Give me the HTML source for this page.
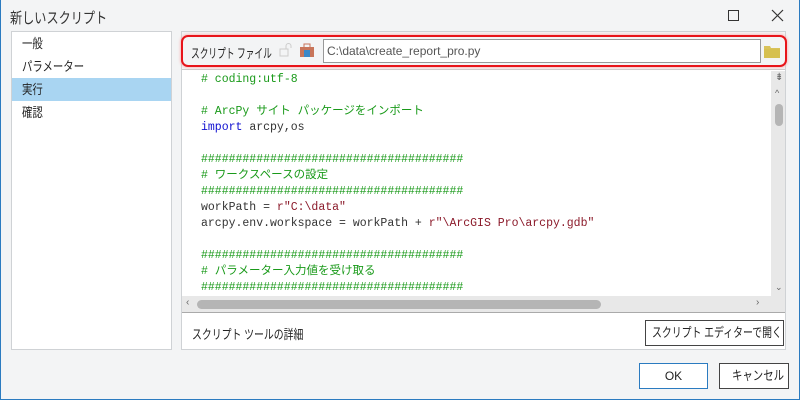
<!DOCTYPE html>
<html><head><meta charset="utf-8"><style>
*{box-sizing:border-box;margin:0;padding:0}
body{width:800px;height:400px;overflow:hidden;background:#f3f4f5;font-family:"Liberation Sans","Noto Sans CJK JP",sans-serif;color:#222;position:relative}
.frame{position:absolute;left:0;top:0;width:800px;height:400px;border:1px solid #2b7bc0;border-top:none}
.abs{position:absolute;white-space:nowrap}
.n{display:inline-block;transform:scaleX(.8);transform-origin:left center;white-space:nowrap}
.title{left:10px;top:7px;font-size:15px;color:#333}
.list{left:11px;top:31px;width:161px;height:319px;background:#fff;border:1px solid #cfd2d5}
.list div{height:23px;line-height:23px;padding-left:10px;font-size:13px}
.panel{left:181px;top:31px;width:605px;height:319px;background:#fff;border:1px solid #cfd2d5}
.tb{left:182px;top:32px;width:603px;height:38px;background:#f3f4f5;border-bottom:1px solid #ccc}
.red{left:181px;top:35px;width:606px;height:32px;border:2px solid #e8141a;border-radius:7px;box-shadow:0 0 3px #f99}
.code{left:201px;top:72px;font-family:"Liberation Mono","Noto Sans CJK JP",monospace;font-size:11.5px;line-height:16px;white-space:pre;color:#333}
.c{color:#1a9a1a}.s{color:#8b1a2a}.k{color:#1010d0}
.btn{border:1px solid #444;background:#fff;font-size:12px;text-align:center;overflow:hidden}
</style></head><body>
<div class="frame"></div>
<div class="abs title"><span class="n" style="transform:scaleX(.81)">新しいスクリプト</span></div>
<div class="abs" style="left:728px;top:10px;width:11px;height:11px;border:1px solid #333"></div>
<svg class="abs" style="left:771px;top:9px" width="13" height="13"><path d="M1 1L12 12M12 1L1 12" stroke="#333" stroke-width="1.2"/></svg>
<div class="abs list"><div><span class="n">一般</span></div><div><span class="n">パラメーター</span></div><div style="background:#a9d5f2"><span class="n">実行</span></div><div><span class="n">確認</span></div></div>
<div class="abs panel"></div>
<div class="abs tb"></div>
<div class="abs" style="left:191px;top:43px;font-size:13px"><span class="n" style="transform:scaleX(.67)">スクリプト ファイル</span></div>
<svg class="abs" style="left:279px;top:43px" width="14" height="14"><rect x="1" y="6" width="8" height="7" fill="none" stroke="#ccc"/><path d="M7 6V3a2.5 2.5 0 0 1 5 0v2" fill="none" stroke="#ccc"/></svg>
<svg class="abs" style="left:299px;top:43px" width="16" height="16"><rect x="1" y="4" width="14" height="10" fill="#c8755a"/><rect x="5" y="1" width="6" height="4" fill="none" stroke="#c8755a"/><rect x="5" y="7" width="6" height="7" fill="#3a88c8"/></svg>
<div class="abs" style="left:323px;top:39px;width:438px;height:24px;border:1px solid #999;background:#fff;font-size:12px;line-height:22px;padding-left:3px;color:#555">C:\data\create_report_pro.py</div>
<svg class="abs" style="left:764px;top:44px" width="16" height="14"><path d="M0 2h6l1 2h9v10H0z" fill="#d9c25a"/><rect x="0" y="5" width="16" height="9" fill="#d6c050"/></svg>
<div class="abs red"></div>
<div class="abs code"><span class="c"># coding:utf-8</span>

<span class="c"># ArcPy サイト パッケージをインポート</span>
<span class="k">import</span> arcpy,os

<span class="c">######################################</span>
<span class="c"># ワークスペースの設定</span>
<span class="c">######################################</span>
workPath = <span class="s">r"C:\data"</span>
arcpy.env.workspace = workPath + <span class="s">r"\ArcGIS Pro\arcpy.gdb"</span>

<span class="c">######################################</span>
<span class="c"># パラメーター入力値を受け取る</span>
<span class="c">######################################</span></div>
<div class="abs" style="left:771px;top:71px;width:14px;height:225px;background:#e8e8e8"></div>
<div class="abs" style="left:775px;top:72px;font-size:10px;color:#666">⇟</div>
<div class="abs" style="left:775px;top:88px;font-size:9px;color:#666">^</div>
<div class="abs" style="left:775px;top:104px;width:8px;height:22px;border-radius:4px;background:#b5b5b5"></div>
<div class="abs" style="left:775px;top:282px;font-size:9px;color:#666">⌄</div>
<div class="abs" style="left:182px;top:296px;width:603px;height:17px;background:#e8e8e8;border-bottom:1px solid #aaa"></div>
<div class="abs" style="left:186px;top:297px;font-size:10px;color:#666">‹</div>
<div class="abs" style="left:197px;top:300px;width:404px;height:9px;border-radius:5px;background:#b5b5b5"></div>
<div class="abs" style="left:756px;top:297px;font-size:10px;color:#666">›</div>
<div class="abs" style="left:192px;top:324px;font-size:13px"><span class="n" style="transform:scaleX(.76)">スクリプト ツールの詳細</span></div>
<div class="abs btn" style="left:645px;top:320px;width:139px;height:26px;line-height:24px;text-align:left;padding-left:6px"><span class="n" style="transform:scaleX(.76);font-size:13px">スクリプト エディターで開く</span></div>
<div class="abs btn" style="left:639px;top:363px;width:69px;height:26px;line-height:24px;border-color:#2b7bc0">OK</div>
<div class="abs btn" style="left:719px;top:363px;width:70px;height:26px;line-height:24px;text-align:left;padding-left:12px"><span class="n" style="font-size:13px">キャンセル</span></div>
</body></html>
